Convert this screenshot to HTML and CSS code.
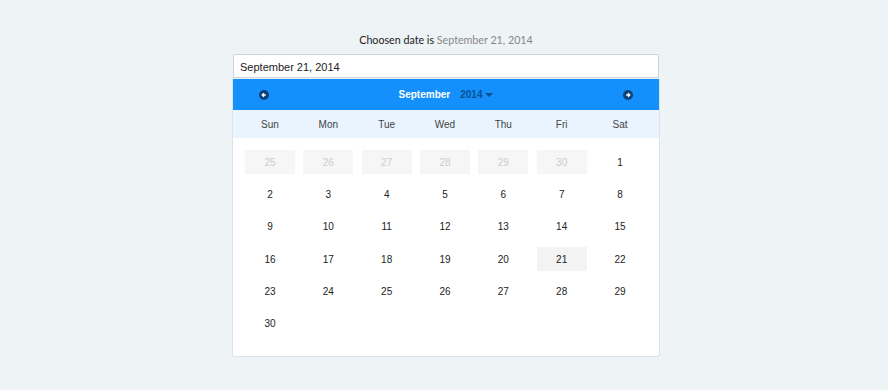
FILE: index.html
```html
<!DOCTYPE html>
<html lang="en">
<head>
    <meta charset="UTF-8">
    <title>Datepicker</title>
    <link rel="stylesheet" href="styles.css">
</head>
<body>
    <div class="wrap">
        <p class="chosen">Choosen date is <span>September 21, 2014</span></p>
        <input class="date-input" type="text" value="September 21, 2014">

        <!-- Calendar -->
        <div class="calendar">
            <div class="cal-head">
                <button class="nav">
                    <svg width="10" height="10" viewBox="0 0 10 10"><circle cx="5" cy="5" r="5" fill="#0b4478"/><path d="M6.8 5H3.4M5 3.2L3.2 5 5 6.8" stroke="#fff" stroke-width="1.3" fill="none"/></svg>
                </button>
                <div class="title">
                    <span class="month">September</span>
                    <span class="year">2014 <i class="caret"></i></span>
                </div>
                <button class="nav">
                    <svg width="10" height="10" viewBox="0 0 10 10"><circle cx="5" cy="5" r="5" fill="#0b4478"/><path d="M3.2 5h3.4M5 3.2L6.8 5 5 6.8" stroke="#fff" stroke-width="1.3" fill="none"/></svg>
                </button>
            </div>
            <div class="weekdays">
                <span>Sun</span><span>Mon</span><span>Tue</span><span>Wed</span><span>Thu</span><span>Fri</span><span>Sat</span>
            </div>
            <div class="days">
                <span class="off">25</span><span class="off">26</span><span class="off">27</span><span class="off">28</span><span class="off">29</span><span class="off">30</span><span>1</span>
                <span>2</span><span>3</span><span>4</span><span>5</span><span>6</span><span>7</span><span>8</span>
                <span>9</span><span>10</span><span>11</span><span>12</span><span>13</span><span>14</span><span>15</span>
                <span>16</span><span>17</span><span>18</span><span>19</span><span>20</span><span class="selected">21</span><span>22</span>
                <span>23</span><span>24</span><span>25</span><span>26</span><span>27</span><span>28</span><span>29</span>
                <span>30</span>
            </div>
        </div>
    </div>
</body>
</html>
```

FILE: styles.css
```css
body {
    margin: 0;
    padding: 33px 0 0 4px;
    background-color: #eef3f6;
    font-family: "Liberation Sans", Arial, sans-serif;
    color: #222;
}
.wrap {
    width: 428px;
    margin: 0 auto;
}
.chosen {
    margin: 0 0 7px;
    text-align: center;
    font-family: Lato, "Liberation Sans", sans-serif;
    font-size: 10.7px;
    line-height: 14px;
    color: #222;
}
.chosen span {
    color: #888;
}
.date-input {
    display: block;
    box-sizing: border-box;
    width: 426px;
    height: 24px;
    margin: 0 1px;
    padding: 1px 6px 0;
    border: 1px solid #cdd3d8;
    border-radius: 2px 2px 0 0;
    font-family: "Liberation Sans", Arial, sans-serif;
    font-size: 11px;
    color: #222;
    background: #fff;
    outline: none;
}
.calendar {
    background: #fff;
    border: 1px solid #dde3e8;
    border-top: none;
    border-radius: 0 0 3px 3px;
    padding-bottom: 21px;
}
.cal-head {
    height: 31px;
    background-color: #1390fb;
    display: flex;
    align-items: center;
    justify-content: space-between;
    padding: 0 26px 0 26px;
    margin-top: 1px;
}
.nav {
    border: none;
    background: none;
    padding: 0;
    width: 10px;
    height: 10px;
    display: flex;
    cursor: pointer;
}
.title {
    display: flex;
    align-items: center;
    gap: 10px;
    font-size: 10px;
    font-weight: bold;
}
.month {
    color: #fff;
}
.year {
    color: #0b4f8f;
    display: flex;
    align-items: center;
    gap: 3px;
}
.caret {
    width: 0;
    height: 0;
    border-left: 4px solid transparent;
    border-right: 4px solid transparent;
    border-top: 4px solid #0b4f8f;
}
.weekdays, .days {
    display: grid;
    grid-template-columns: repeat(7, 50px);
    column-gap: 8.33px;
    justify-content: center;
    padding-right: 2px;
}
.weekdays {
    height: 28px;
    align-items: center;
    background-color: #e9f4ff;
    font-size: 10px;
    color: #444;
    text-align: center;
}
.days {
    row-gap: 8.2px;
    padding-top: 12px;
    font-size: 10px;
}
.days span {
    height: 24px;
    line-height: 25px;
    text-align: center;
    color: #222;
}
.days .off {
    background-color: #f6f6f6;
    color: #ccc;
}
.days .selected {
    background-color: #f3f3f3;
}
```
